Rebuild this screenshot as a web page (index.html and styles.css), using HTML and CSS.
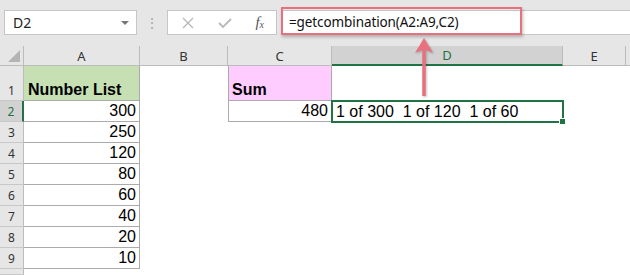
FILE: index.html
```html
<!DOCTYPE html>
<html lang="en">
<head>
    <meta charset="UTF-8"><title>getcombination</title>
    <link rel="stylesheet" href="styles.css">
</head>
<body>
<div class="sheetWindow">
    <div class="formulaBar">
        <div class="nameBox">
            <span>D2</span>
            <span class="dropArrow"></span>
        </div>
        <div class="grip">&#8942;</div>
        <div class="buttonBox">
            <svg width="12" height="12" viewBox="0 0 12 12"><path d="M1 1 L11 11 M11 1 L1 11" stroke="#b9b9b9" stroke-width="1.4" fill="none"/></svg>
            <svg width="14" height="12" viewBox="0 0 14 12"><path d="M1 6 L5 10 L13 2" stroke="#b9b9b9" stroke-width="1.8" fill="none"/></svg>
            <span class="fx">f<sub>x</sub></span>
        </div>
        <div class="formulaInput">=getcombination(A2:A9,C2)</div>
    </div>

    <div class="grid">
        <div class="corner"></div>
        <div class="colHead">A</div>
        <div class="colHead">B</div>
        <div class="colHead">C</div>
        <div class="colHead selectedCol">D</div>
        <div class="colHead">E</div>
        <div class="colHead last"></div>

        <div class="rowHead tall">1</div>
        <div class="cell listCell titleGreen">Number List</div>
        <div class="cell"></div>
        <div class="cell sumCell titlePink">Sum</div>
        <div class="cell"></div>
        <div class="cell"></div>
        <div class="cell"></div>

        <div class="rowHead selectedRow">2</div>
        <div class="cell listCell num">300</div>
        <div class="cell"></div>
        <div class="cell sumCell num">480</div>
        <div class="cell activeCell">1 of 300&nbsp; 1 of 120&nbsp; 1 of 60</div>
        <div class="cell"></div>
        <div class="cell"></div>

        <div class="rowHead">3</div>
        <div class="cell listCell num">250</div>
        <div class="cell"></div><div class="cell"></div><div class="cell"></div><div class="cell"></div><div class="cell"></div>

        <div class="rowHead">4</div>
        <div class="cell listCell num">120</div>
        <div class="cell"></div><div class="cell"></div><div class="cell"></div><div class="cell"></div><div class="cell"></div>

        <div class="rowHead">5</div>
        <div class="cell listCell num">80</div>
        <div class="cell"></div><div class="cell"></div><div class="cell"></div><div class="cell"></div><div class="cell"></div>

        <div class="rowHead">6</div>
        <div class="cell listCell num">60</div>
        <div class="cell"></div><div class="cell"></div><div class="cell"></div><div class="cell"></div><div class="cell"></div>

        <div class="rowHead">7</div>
        <div class="cell listCell num">40</div>
        <div class="cell"></div><div class="cell"></div><div class="cell"></div><div class="cell"></div><div class="cell"></div>

        <div class="rowHead">8</div>
        <div class="cell listCell num">20</div>
        <div class="cell"></div><div class="cell"></div><div class="cell"></div><div class="cell"></div><div class="cell"></div>

        <div class="rowHead">9</div>
        <div class="cell listCell num">10</div>
        <div class="cell"></div><div class="cell"></div><div class="cell"></div><div class="cell"></div><div class="cell"></div>

        <div class="rowHead"></div>
    </div>

    <!-- annotation: highlight box and arrow -->
    <div class="callout"></div>
    <svg class="arrow" width="24" height="62" viewBox="0 0 24 62">
        <path d="M12 60 L12 8" stroke="#e8707f" stroke-width="3.5" fill="none"/>
        <path d="M3 17 L12 2 L21 17 L12 13 Z" fill="#e8707f"/>
    </svg>
</div>
</body>
</html>
```
FILE: styles.css
```css
html {
    font-family: "Liberation Sans", Arial, sans-serif;
}
body {
    margin: 0;
    background-color: white;
}
.sheetWindow {
    position: relative;
    width: 630px;
    height: 275px;
    overflow: hidden;
}
.formulaBar {
    display: flex;
    align-items: flex-start;
    height: 46px;
    padding-top: 10px;
    box-sizing: border-box;
    background-color: #e6e6e6;
    font-family: "Noto Sans", sans-serif;
}
.nameBox {
    display: flex;
    align-items: center;
    justify-content: space-between;
    margin-left: 4px;
    width: 133px;
    height: 25px;
    padding: 0 7px 0 8px;
    box-sizing: border-box;
    border: 1px solid #c6c6c6;
    background-color: white;
    font-size: 14px;
    color: #222;
}
.dropArrow {
    width: 0;
    height: 0;
    border-left: 4px solid transparent;
    border-right: 4px solid transparent;
    border-top: 4px solid #777;
}
.grip {
    width: 30px;
    text-align: center;
    color: #a8a8a8;
    font-size: 14px;
    line-height: 25px;
}
.buttonBox {
    display: flex;
    align-items: center;
    justify-content: space-between;
    width: 110px;
    height: 25px;
    padding: 0 12px 0 14px;
    box-sizing: border-box;
    border: 1px solid #c6c6c6;
    background-color: white;
}
.fx {
    font-family: "Liberation Serif", serif;
    font-style: italic;
    font-size: 15px;
    color: #555;
    line-height: 1;
}
.fx sub {
    font-size: 10px;
    vertical-align: -1px;
}
.formulaInput {
    margin-left: 5px;
    flex-grow: 1;
    height: 25px;
    padding-left: 6px;
    box-sizing: border-box;
    border: 1px solid #c6c6c6;
    border-right: none;
    background-color: white;
    font-size: 13.5px;
    letter-spacing: -0.1px;
    line-height: 23px;
    color: #111;
}
.grid {
    display: grid;
    grid-template-columns: 24px 116px 88px 104px 231px 63px 1fr;
    grid-template-rows: 20px 35px repeat(8, 21px) 1fr;
    height: 229px;
}
.corner {
    position: relative;
    background-color: #e6e6e6;
    border-right: 1px solid #bcbcbc;
    border-bottom: 1px solid #bcbcbc;
}
.corner::after {
    content: "";
    position: absolute;
    right: 3px;
    bottom: 3px;
    border-left: 12px solid transparent;
    border-bottom: 12px solid #b4b4b4;
}
.colHead {
    background-color: #e6e6e6;
    border-right: 1px solid #bcbcbc;
    border-bottom: 1px solid #bcbcbc;
    display: flex;
    align-items: center;
    justify-content: center;
    font-family: "Noto Sans", sans-serif;
    font-size: 13px;
    color: #333;
}
.colHead.last {
    border-right: none;
}
.selectedCol {
    background-color: #d2d2d2;
    border-bottom: 2px solid #217346;
    color: #217346;
}
.rowHead {
    background-color: #e6e6e6;
    border-right: 1px solid #bcbcbc;
    border-bottom: 1px solid #c8c8c8;
    box-sizing: border-box;
    display: flex;
    align-items: flex-end;
    justify-content: center;
    padding-bottom: 1px;
    font-family: "Noto Sans", sans-serif;
    font-size: 12px;
    color: #333;
}
.selectedRow {
    background-color: #d2d2d2;
    border-right: 2px solid #217346;
    color: #217346;
}
.cell {
    box-sizing: border-box;
    font-size: 16px;
    color: black;
    display: flex;
    align-items: flex-end;
    padding: 0 3px 1px 3px;
    white-space: nowrap;
}
.listCell {
    border-right: 1px solid #ababab;
    border-bottom: 1px solid #ababab;
}
.sumCell {
    border-left: 1px solid #ababab;
    border-right: 1px solid #ababab;
    border-bottom: 1px solid #ababab;
}
.num {
    justify-content: flex-end;
}
.titleGreen {
    background-color: #c6e0b4;
    font-weight: bold;
    padding-left: 4px;
}
.titlePink {
    background-color: #ffccff;
    font-weight: bold;
}
.activeCell {
    position: relative;
    outline: 2px solid #217346;
    outline-offset: -1px;
    padding-left: 4px;
}
.activeCell::after {
    content: "";
    position: absolute;
    right: -3px;
    bottom: -3px;
    width: 5px;
    height: 5px;
    background-color: #217346;
    border: 1px solid white;
}
.callout {
    position: absolute;
    left: 281px;
    top: 7px;
    width: 241px;
    height: 28px;
    box-sizing: border-box;
    border: 2px solid #e8707f;
    box-shadow: 1px 2px 3px rgba(0, 0, 0, 0.25);
}
.arrow {
    position: absolute;
    left: 412px;
    top: 36px;
    filter: drop-shadow(1px 1px 1px rgba(0, 0, 0, 0.25));
}
```
